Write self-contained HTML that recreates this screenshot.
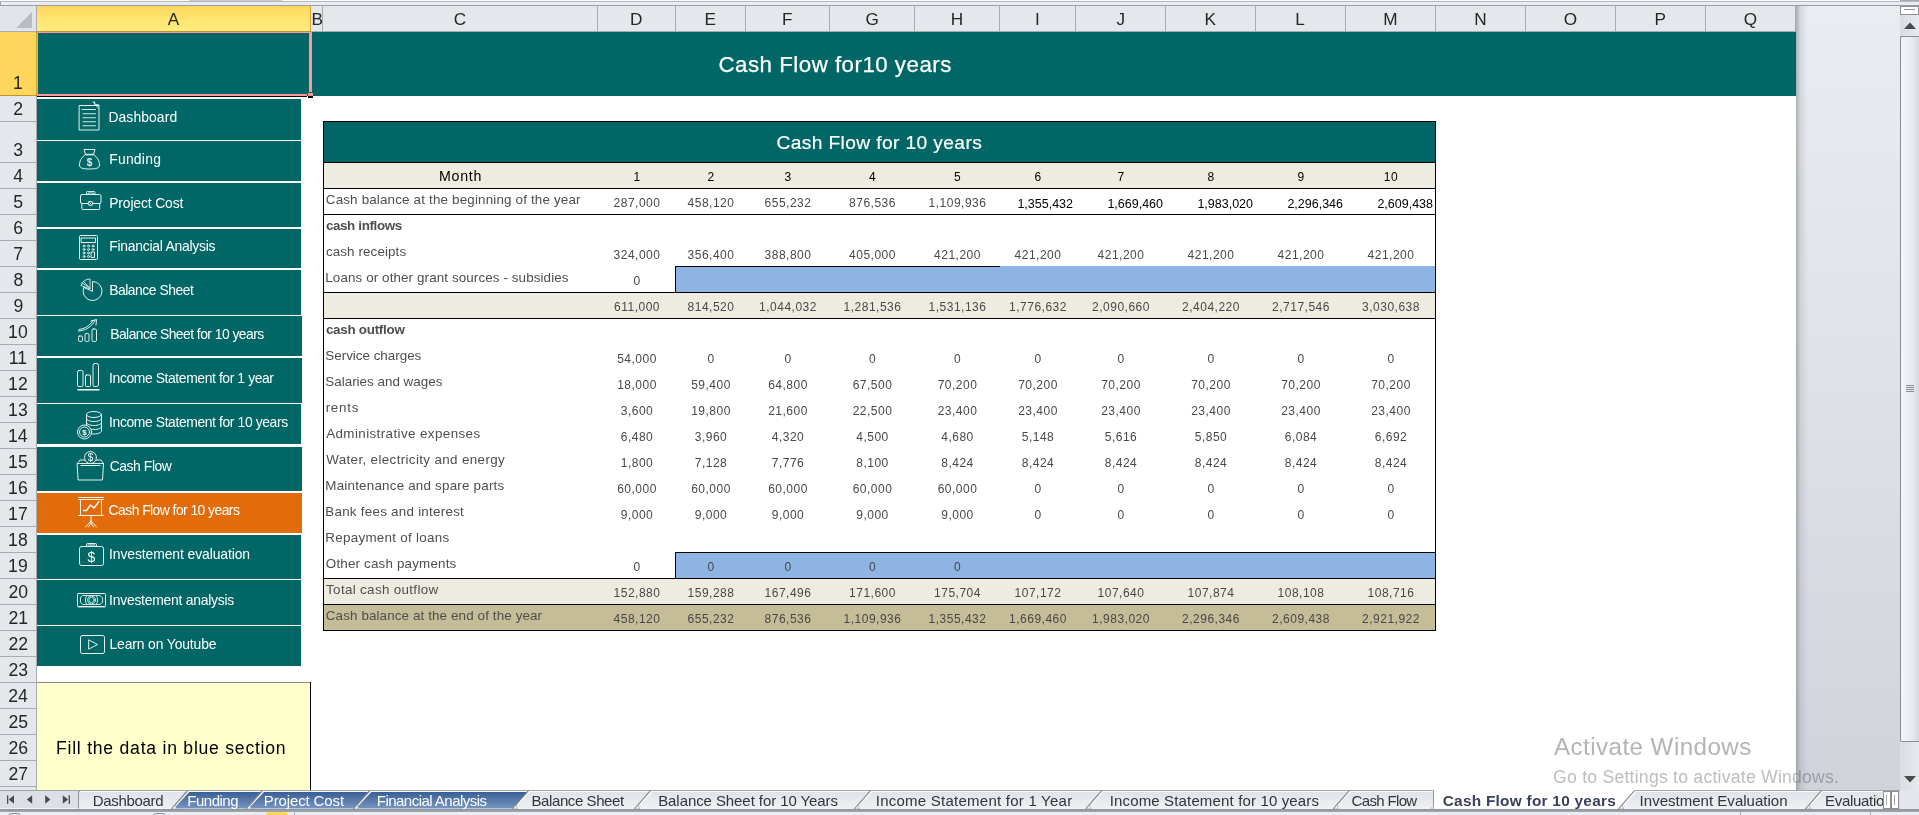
<!DOCTYPE html>
<html lang="en"><head><meta charset="utf-8"><title>Cash Flow for 10 years</title>
<style>
html,body{margin:0;padding:0}
body{width:1919px;height:815px;overflow:hidden;background:#fff;position:relative;font-family:"Liberation Sans",sans-serif;}
.a{position:absolute}
.t{position:absolute;white-space:nowrap;line-height:1}
.ch{position:absolute;top:6px;height:25px;background:#e4e7eb;border-right:1px solid #a9abae;border-bottom:1px solid #a9abae}
.rh{position:absolute;left:0;width:36px;background:#e4e7eb;border-right:1px solid #a9abae;border-bottom:1px solid #a9abae}
.btn{position:absolute;left:37px;background:#006666}
svg.i{position:absolute;overflow:visible;fill:none;stroke:#fff;stroke-width:.9;stroke-linejoin:round;stroke-linecap:round}
.n{position:absolute;white-space:nowrap;line-height:1;color:#484848;font-size:12.0px;letter-spacing:0.5px;text-align:center}
</style></head><body>

<div class="a" style="left:0;top:0;width:1919px;height:1px;background:#fdfdfe"></div>
<div class="a" style="left:0;top:1px;width:1919px;height:1px;background:#b5b8bf"></div>
<div class="a" style="left:0;top:2px;width:1919px;height:3px;background:#e9ebf5"></div>
<div class="a" style="left:0;top:5px;width:1919px;height:1px;background:#9a9ca0"></div>
<div class="a" style="left:1900px;top:0;width:19px;height:1px;background:#a8aaad"></div>
<div class="a" style="left:0;top:2px;width:1px;height:30px;background:#a0a4ab"></div>
<div class="a" style="left:189px;top:0;width:93px;height:1px;background:#c9cbd1"></div>
<div class="a" style="left:0;top:6px;width:36px;height:25px;background:#e1e4e9;border-right:1px solid #a9abae;border-bottom:1px solid #a9abae"></div>
<svg class="a" style="left:15px;top:11px" width="18" height="18"><polygon points="17,1 17,17 1,17" fill="#b9bdc2"/></svg>
<div class="ch" style="left:37px;width:273px;background:linear-gradient(#ffd65c,#ffe36e 45%,#ffec80);border-right-color:#d9a234;border-bottom-color:#c8902a"></div>
<div class="ch" style="left:311px;width:11px;"></div>
<div class="ch" style="left:323px;width:274px;"></div>
<div class="ch" style="left:598px;width:77px;"></div>
<div class="ch" style="left:676px;width:69px;"></div>
<div class="ch" style="left:746px;width:83px;"></div>
<div class="ch" style="left:830px;width:84px;"></div>
<div class="ch" style="left:915px;width:84px;"></div>
<div class="ch" style="left:1000px;width:75px;"></div>
<div class="ch" style="left:1076px;width:89px;"></div>
<div class="ch" style="left:1166px;width:89px;"></div>
<div class="ch" style="left:1256px;width:89px;"></div>
<div class="ch" style="left:1346px;width:89px;"></div>
<div class="ch" style="left:1436px;width:89px;"></div>
<div class="ch" style="left:1526px;width:89px;"></div>
<div class="ch" style="left:1616px;width:89px;"></div>
<div class="ch" style="left:1706px;width:89px;"></div>
<div class="rh" style="top:32px;height:63px;background:#ffd65c;border-right-color:#d9a234;border-bottom-color:#c8902a"></div>
<div class="rh" style="top:96px;height:25px;"></div>
<div class="rh" style="top:122px;height:40px;"></div>
<div class="rh" style="top:163px;height:25px;"></div>
<div class="rh" style="top:189px;height:25px;"></div>
<div class="rh" style="top:215px;height:25px;"></div>
<div class="rh" style="top:241px;height:25px;"></div>
<div class="rh" style="top:267px;height:25px;"></div>
<div class="rh" style="top:293px;height:25px;"></div>
<div class="rh" style="top:319px;height:25px;"></div>
<div class="rh" style="top:345px;height:25px;"></div>
<div class="rh" style="top:371px;height:25px;"></div>
<div class="rh" style="top:397px;height:25px;"></div>
<div class="rh" style="top:423px;height:25px;"></div>
<div class="rh" style="top:449px;height:25px;"></div>
<div class="rh" style="top:475px;height:25px;"></div>
<div class="rh" style="top:501px;height:25px;"></div>
<div class="rh" style="top:527px;height:25px;"></div>
<div class="rh" style="top:553px;height:25px;"></div>
<div class="rh" style="top:579px;height:25px;"></div>
<div class="rh" style="top:605px;height:25px;"></div>
<div class="rh" style="top:631px;height:25px;"></div>
<div class="rh" style="top:657px;height:25px;"></div>
<div class="rh" style="top:683px;height:25px;"></div>
<div class="rh" style="top:709px;height:25px;"></div>
<div class="rh" style="top:735px;height:25px;"></div>
<div class="rh" style="top:761px;height:25px;"></div>
<div class="a" style="left:0;top:787px;width:36px;height:3px;background:#e4e7eb;border-right:1px solid #a9abae"></div>
<div class="a" style="left:37px;top:32px;width:1759px;height:64px;background:#006666"></div>
<div class="t" style="left:718.5px;top:54px;font-size:22.3px;color:#fff;letter-spacing:0.49px;-webkit-text-stroke:.25px #fff;">Cash Flow for10 years</div>
<div class="a" style="left:37px;top:32px;width:274px;height:1px;background:#ff9999"></div>
<div class="a" style="left:37px;top:32px;width:1px;height:64px;background:#ff9999"></div>
<div class="a" style="left:37px;top:94px;width:270px;height:2px;background:#ff9999"></div>
<div class="a" style="left:37px;top:96px;width:270px;height:1px;background:#000"></div>
<div class="a" style="left:309px;top:32px;width:3px;height:60px;background:#ff9999"></div>
<div class="a" style="left:308px;top:93px;width:5px;height:3px;background:#ff9999"></div>
<div class="a" style="left:308px;top:96px;width:5px;height:2px;background:#000"></div>
<div class="btn" style="top:99px;height:41px;width:264px;background:#006666"></div>
<svg class="i" style="left:79px;top:101px" width="22" height="30"><rect x=".5" y="4.500" width="19.500" height="24.500"/><path d="M3 8.500h13.500" stroke-dasharray="1.200 .9" stroke-width=".9"/><path d="M4 12.700h12.500M4 16.700h12.500M4 20.700h12.500M4 24.700h12.500" stroke-width="1.150" opacity=".85"/><path d="M14 .8l5.500 6.500M15.500 .5l.5 3M17 3.500l3 .5" stroke-width=".8"/></svg>
<div class="t" style="left:108.4px;top:111px;font-size:13.9px;color:#fff;letter-spacing:0.1px;">Dashboard</div>
<div class="btn" style="top:141px;height:40px;width:264px;background:#006666"></div>
<svg class="i" style="left:79px;top:149px" width="22" height="21"><path d="M6.500 5.500C2 8.500 .5 12.500 .5 16c0 3 3 4 10 4s10-1 10-4c0-3.500-1.500-7.500-6-10.500z"/><path d="M6.500 5.500L5 .5h11l-1.500 5z"/><text x="10.500" y="16.800" font-size="10" font-weight="bold" style="font-family:Liberation Sans,sans-serif;fill:#fff;stroke:none;text-anchor:middle" opacity=".9">$</text></svg>
<div class="t" style="left:109.2px;top:153px;font-size:13.9px;color:#fff;letter-spacing:0.25px;">Funding</div>
<div class="btn" style="top:183px;height:44px;width:264px;background:#006666"></div>
<svg class="i" style="left:80px;top:191px" width="22" height="20"><rect x=".5" y="3.500" width="20.500" height="9" rx="1.500"/><path d="M1.800 12.500v5.200q0 .8 .8 .8h16.300q.8 0 .8-.8v-5.200"/><path d="M6.500 3.500V1.300q0-.8 .8-.8h6.900q.8 0 .8 .8v2.200M8 3.500V2h5.500v1.500" stroke-width=".8"/><rect x="8.300" y="10.600" width="4.400" height="3.700" rx=".9" fill="#006666"/><path d="M9.500 11.500l2 2M11.500 11.500l-2 2" stroke-width=".6"/></svg>
<div class="t" style="left:109.2px;top:197px;font-size:13.9px;color:#fff;letter-spacing:-0.14px;">Project Cost</div>
<div class="btn" style="top:229px;height:39px;width:264px;background:#006666"></div>
<svg class="i" style="left:79px;top:235px" width="20" height="25"><rect x=".5" y=".5" width="18" height="24" rx="1"/><rect x="2.500" y="3" width="14" height="4.500"/><g stroke-width=".8"><circle cx="5" cy="11" r="1"/><circle cx="9.500" cy="11" r="1"/><circle cx="14" cy="11" r="1"/><circle cx="5" cy="14.500" r="1"/><circle cx="9.500" cy="14.500" r="1"/><circle cx="14" cy="14.500" r="1"/><circle cx="5" cy="18" r="1"/><circle cx="9.500" cy="18" r="1"/><circle cx="5" cy="21.500" r="1"/><circle cx="9.500" cy="21.500" r="1"/></g><rect x="12.500" y="17" width="3" height="5.500"/></svg>
<div class="t" style="left:109.2px;top:240px;font-size:13.9px;color:#fff;letter-spacing:-0.24px;">Financial Analysis</div>
<div class="btn" style="top:270px;height:45px;width:264px;background:#006666"></div>
<svg class="i" style="left:79px;top:278px" width="25" height="24"><path d="M13.500 13V3.500A9.500 9.500 0 1 1 4.600 9.700z"/><path d="M11 10.500V1A9.500 9.500 0 0 0 2.100 7.200zM11 10.500L4.500 3.300M9.500 9L3 5" stroke-width=".8"/></svg>
<div class="t" style="left:109.2px;top:284px;font-size:13.9px;color:#fff;letter-spacing:-0.47px;">Balance Sheet</div>
<div class="btn" style="top:316px;height:40px;width:265px;background:#006666"></div>
<svg class="i" style="left:78px;top:319px" width="20" height="23"><rect x=".5" y="17" width="4" height="5.500" rx="1.300"/><rect x="7" y="14.500" width="4" height="8" rx="1.300"/><rect x="14" y="10" width="4.500" height="12.500" rx="1.300"/><path d="M.5 12c7-.5 12.500-3.500 16.500-10.500M1 10.500c6-.8 10.500-3.500 14-9"/><path d="M13 2l5.500-1.500-.5 5.500"/></svg>
<div class="t" style="left:110.2px;top:328px;font-size:13.9px;color:#fff;letter-spacing:-0.54px;">Balance Sheet for 10 years</div>
<div class="btn" style="top:358px;height:45px;width:265px;background:#006666"></div>
<svg class="i" style="left:77px;top:363px" width="23" height="28"><rect x=".5" y="7.500" width="5.500" height="16" rx="1.500"/><rect x="8.500" y="12" width="5" height="11.500" rx="1"/><rect x="16" y=".5" width="5.500" height="23" rx="1.800"/><path d="M1 26.800h21" stroke-width="1.600"/></svg>
<div class="t" style="left:109.1px;top:372px;font-size:13.9px;color:#fff;letter-spacing:-0.4px;">Income Statement for 1 year</div>
<div class="btn" style="top:404px;height:40px;width:264px;background:#006666"></div>
<svg class="i" style="left:77px;top:411px" width="25" height="29"><ellipse cx="17" cy="3.500" rx="7.500" ry="3"/><path d="M9.500 3.500v16c0 2 3.300 3.500 7.500 3.500s7.500-1.500 7.500-3V3.500M9.500 7.500c0 1.800 3.300 3 7.500 3s7.500-1.200 7.500-3M9.500 11.500c0 1.800 3.300 3 7.500 3s7.500-1.200 7.500-3M9.500 15.500c0 1.800 3.300 3 7.500 3s7.500-1.200 7.500-3"/><circle cx="7.500" cy="21" r="7" fill="#006666"/><circle cx="7.500" cy="21" r="5"/><text x="7.500" y="24" font-size="8" font-weight="bold" style="font-family:Liberation Sans,sans-serif;fill:#fff;stroke:none;text-anchor:middle">$</text></svg>
<div class="t" style="left:109.1px;top:416px;font-size:13.9px;color:#fff;letter-spacing:-0.39px;">Income Statement for 10 years</div>
<div class="btn" style="top:447px;height:44px;width:265px;background:#006666"></div>
<svg class="i" style="left:76px;top:451px" width="29" height="30"><path d="M1.500 12.500h26l-1 16.500H2.500z"/><path d="M1.500 12.500L4 9h21l2.500 3.500M5 14.500h19" /><circle cx="14.500" cy="6.500" r="6" fill="#006666"/><text x="14.500" y="10" font-size="10" style="font-family:Liberation Sans,sans-serif;fill:#fff;stroke:none;text-anchor:middle">$</text></svg>
<div class="t" style="left:109.7px;top:460px;font-size:13.9px;color:#fff;letter-spacing:-0.43px;">Cash Flow</div>
<div class="btn" style="top:493px;height:40px;width:265px;background:#e36c0a"></div>
<svg class="i" style="left:78px;top:497px" width="26" height="31"><path d="M.5 .5h25M.5 2.500h25M.5 18.500h25"/><path d="M2.500 2.500v16M23.500 2.500v16"/><path d="M5.500 13.500h3l4-5.500 3.500 3 5-6.500" stroke-width="1.300"/><path d="M13 18.500v7M13 24l-5.500 6 M13 24l5.500 6M13 26l-2.500 4M13 26l2.500 4"/></svg>
<div class="t" style="left:108.6px;top:504px;font-size:13.9px;color:#fff;letter-spacing:-0.55px;">Cash Flow for 10 years</div>
<div class="btn" style="top:535px;height:44px;width:264px;background:#006666"></div>
<svg class="i" style="left:79px;top:543px" width="25" height="23"><rect x=".5" y="3.500" width="24" height="19" rx="2"/><path d="M7.500 3.500v-2q0-1 1-1h8q1 0 1 1v2M9 2h7"/><text x="12.500" y="18.500" font-size="14" style="font-family:Liberation Sans,sans-serif;fill:#fff;stroke:none;text-anchor:middle">$</text></svg>
<div class="t" style="left:109.1px;top:548px;font-size:13.9px;color:#fff;letter-spacing:-0.09px;">Investement evaluation</div>
<div class="btn" style="top:580px;height:45px;width:264px;background:#006666"></div>
<svg class="i" style="left:77px;top:593px" width="29" height="14"><rect x=".5" y=".5" width="28" height="13" rx=".8"/><path d="M6 2.500h17l2.500 2v5l-2.500 2H6l-2.500-2v-5z" stroke-width=".8"/><circle cx="14.500" cy="7" r="4" stroke-width=".8"/><circle cx="14.500" cy="7" r="2.600" stroke-width=".7"/><path d="M9.500 3c-1.500 1.500-1.500 6.500 0 8M19.500 3c1.500 1.500 1.500 6.500 0 8" stroke-width=".8"/><path d="M1 14h27" stroke-width=".7"/></svg>
<div class="t" style="left:109.1px;top:594px;font-size:13.9px;color:#fff;letter-spacing:-0.24px;">Investement analysis</div>
<div class="btn" style="top:626px;height:40px;width:264px;background:#006666"></div>
<svg class="i" style="left:80px;top:635px" width="25" height="19"><rect x=".5" y=".5" width="24" height="18" rx="1.800"/><path d="M9 5l8.500 4.500L9 14z"/></svg>
<div class="t" style="left:109.5px;top:638px;font-size:13.9px;color:#fff;letter-spacing:-0.13px;">Learn on Youtube</div>
<div class="a" style="left:37px;top:683px;width:273px;height:107px;background:#ffffcc"></div>
<div class="a" style="left:37px;top:682px;width:274px;height:1px;background:#8a8a80"></div>
<div class="a" style="left:310px;top:682px;width:1px;height:108px;background:#000"></div>
<div class="t" style="left:56.0px;top:740px;font-size:17.6px;color:#000;letter-spacing:0.76px;">Fill the data in blue section</div>
<div class="a" style="left:324px;top:122px;width:1111px;height:40px;background:#006666"></div>
<div class="t" style="left:776.5px;top:133px;font-size:19.2px;color:#fff;letter-spacing:0.38px;-webkit-text-stroke:.2px #fff;">Cash Flow for 10 years</div>
<div class="a" style="left:324px;top:163px;width:1111px;height:25px;background:#eeece1"></div>
<div class="a" style="left:324px;top:293px;width:1111px;height:25px;background:#eeece1"></div>
<div class="a" style="left:324px;top:579px;width:1111px;height:25px;background:#eeece1"></div>
<div class="a" style="left:324px;top:605px;width:1111px;height:25px;background:#c4bd97"></div>
<div class="a" style="left:676px;top:267px;width:759px;height:25px;background:#8db4e2"></div>
<div class="a" style="left:676px;top:553px;width:759px;height:25px;background:#8db4e2"></div>
<div class="a" style="left:1000px;top:266px;width:435px;height:1px;background:#8db4e2"></div>
<div class="a" style="left:323px;top:121px;width:1113px;height:1px;background:#000"></div>
<div class="a" style="left:323px;top:162px;width:1113px;height:1px;background:#000"></div>
<div class="a" style="left:323px;top:188px;width:1113px;height:1px;background:#000"></div>
<div class="a" style="left:323px;top:214px;width:1113px;height:1px;background:#000"></div>
<div class="a" style="left:323px;top:292px;width:1113px;height:1px;background:#000"></div>
<div class="a" style="left:323px;top:318px;width:1113px;height:1px;background:#000"></div>
<div class="a" style="left:323px;top:578px;width:1113px;height:1px;background:#000"></div>
<div class="a" style="left:323px;top:604px;width:1113px;height:1px;background:#000"></div>
<div class="a" style="left:323px;top:630px;width:1113px;height:1px;background:#000"></div>
<div class="a" style="left:675px;top:266px;width:325px;height:1px;background:#000"></div>
<div class="a" style="left:675px;top:552px;width:761px;height:1px;background:#000"></div>
<div class="a" style="left:323px;top:121px;width:1px;height:510px;background:#000"></div>
<div class="a" style="left:1435px;top:121px;width:1px;height:510px;background:#000"></div>
<div class="a" style="left:675px;top:266px;width:1px;height:27px;background:#000"></div>
<div class="a" style="left:675px;top:552px;width:1px;height:27px;background:#000"></div>
<div class="t" style="left:325.8px;top:193px;font-size:13.4px;color:#4e4e4e;letter-spacing:0.17px;">Cash balance at the beginning of the year</div>
<div class="t" style="left:325.9px;top:219px;font-size:13.4px;color:#4e4e4e;letter-spacing:-0.37px;font-weight:bold;">cash inflows</div>
<div class="t" style="left:325.9px;top:245px;font-size:13.4px;color:#4e4e4e;letter-spacing:0.11px;">cash receipts</div>
<div class="t" style="left:325.3px;top:271px;font-size:13.4px;color:#4e4e4e;letter-spacing:0.11px;">Loans or other grant sources - subsidies</div>
<div class="t" style="left:325.9px;top:323px;font-size:13.4px;color:#4e4e4e;letter-spacing:-0.26px;font-weight:bold;">cash outflow</div>
<div class="t" style="left:325.3px;top:349px;font-size:13.4px;color:#4e4e4e;letter-spacing:-0.0px;">Service charges</div>
<div class="t" style="left:325.3px;top:375px;font-size:13.4px;color:#4e4e4e;letter-spacing:0.01px;">Salaries and wages</div>
<div class="t" style="left:325.7px;top:401px;font-size:13.4px;color:#4e4e4e;letter-spacing:0.72px;">rents</div>
<div class="t" style="left:326.2px;top:427px;font-size:13.4px;color:#4e4e4e;letter-spacing:0.4px;">Administrative expenses</div>
<div class="t" style="left:326.2px;top:453px;font-size:13.4px;color:#4e4e4e;letter-spacing:0.36px;">Water, electricity and energy</div>
<div class="t" style="left:325.3px;top:479px;font-size:13.4px;color:#4e4e4e;letter-spacing:0.21px;">Maintenance and spare parts</div>
<div class="t" style="left:325.3px;top:505px;font-size:13.4px;color:#4e4e4e;letter-spacing:0.25px;">Bank fees and interest</div>
<div class="t" style="left:325.3px;top:531px;font-size:13.4px;color:#4e4e4e;letter-spacing:0.28px;">Repayment of loans</div>
<div class="t" style="left:325.8px;top:557px;font-size:13.4px;color:#4e4e4e;letter-spacing:0.18px;">Other cash payments</div>
<div class="t" style="left:326.1px;top:583px;font-size:13.4px;color:#4e4e4e;letter-spacing:0.33px;">Total cash outflow</div>
<div class="t" style="left:325.8px;top:609px;font-size:13.4px;color:#4e4e4e;letter-spacing:0.12px;">Cash balance at the end of the year</div>
<div class="t" style="left:439.1px;top:169px;font-size:14.2px;color:#000;letter-spacing:0.7px;">Month</div>
<div class="n" style="left:598px;width:78px;top:163px;margin-top:8px;color:#000;">1</div>
<div class="n" style="left:676px;width:70px;top:163px;margin-top:8px;color:#000;">2</div>
<div class="n" style="left:746px;width:84px;top:163px;margin-top:8px;color:#000;">3</div>
<div class="n" style="left:830px;width:85px;top:163px;margin-top:8px;color:#000;">4</div>
<div class="n" style="left:915px;width:85px;top:163px;margin-top:8px;color:#000;">5</div>
<div class="n" style="left:1000px;width:76px;top:163px;margin-top:8px;color:#000;">6</div>
<div class="n" style="left:1076px;width:90px;top:163px;margin-top:8px;color:#000;">7</div>
<div class="n" style="left:1166px;width:90px;top:163px;margin-top:8px;color:#000;">8</div>
<div class="n" style="left:1256px;width:90px;top:163px;margin-top:8px;color:#000;">9</div>
<div class="n" style="left:1346px;width:90px;top:163px;margin-top:8px;color:#000;">10</div>
<div class="n" style="left:598px;width:78px;top:189px;margin-top:8px;">287,000</div>
<div class="n" style="left:676px;width:70px;top:189px;margin-top:8px;">458,120</div>
<div class="n" style="left:746px;width:84px;top:189px;margin-top:8px;">655,232</div>
<div class="n" style="left:830px;width:85px;top:189px;margin-top:8px;">876,536</div>
<div class="n" style="left:915px;width:85px;top:189px;margin-top:8px;">1,109,936</div>
<div class="n" style="left:1000px;width:73px;top:189px;margin-top:9px;text-align:right;color:#000;font-size:12.5px;letter-spacing:0">1,355,432</div>
<div class="n" style="left:1076px;width:87px;top:189px;margin-top:9px;text-align:right;color:#000;font-size:12.5px;letter-spacing:0">1,669,460</div>
<div class="n" style="left:1166px;width:87px;top:189px;margin-top:9px;text-align:right;color:#000;font-size:12.5px;letter-spacing:0">1,983,020</div>
<div class="n" style="left:1256px;width:87px;top:189px;margin-top:9px;text-align:right;color:#000;font-size:12.5px;letter-spacing:0">2,296,346</div>
<div class="n" style="left:1346px;width:87px;top:189px;margin-top:9px;text-align:right;color:#000;font-size:12.5px;letter-spacing:0">2,609,438</div>
<div class="n" style="left:598px;width:78px;top:241px;margin-top:8px;">324,000</div>
<div class="n" style="left:676px;width:70px;top:241px;margin-top:8px;">356,400</div>
<div class="n" style="left:746px;width:84px;top:241px;margin-top:8px;">388,800</div>
<div class="n" style="left:830px;width:85px;top:241px;margin-top:8px;">405,000</div>
<div class="n" style="left:915px;width:85px;top:241px;margin-top:8px;">421,200</div>
<div class="n" style="left:1000px;width:76px;top:241px;margin-top:8px;">421,200</div>
<div class="n" style="left:1076px;width:90px;top:241px;margin-top:8px;">421,200</div>
<div class="n" style="left:1166px;width:90px;top:241px;margin-top:8px;">421,200</div>
<div class="n" style="left:1256px;width:90px;top:241px;margin-top:8px;">421,200</div>
<div class="n" style="left:1346px;width:90px;top:241px;margin-top:8px;">421,200</div>
<div class="n" style="left:598px;width:78px;top:267px;margin-top:8px;">0</div>
<div class="n" style="left:598px;width:78px;top:293px;margin-top:8px;">611,000</div>
<div class="n" style="left:676px;width:70px;top:293px;margin-top:8px;">814,520</div>
<div class="n" style="left:746px;width:84px;top:293px;margin-top:8px;">1,044,032</div>
<div class="n" style="left:830px;width:85px;top:293px;margin-top:8px;">1,281,536</div>
<div class="n" style="left:915px;width:85px;top:293px;margin-top:8px;">1,531,136</div>
<div class="n" style="left:1000px;width:76px;top:293px;margin-top:8px;">1,776,632</div>
<div class="n" style="left:1076px;width:90px;top:293px;margin-top:8px;">2,090,660</div>
<div class="n" style="left:1166px;width:90px;top:293px;margin-top:8px;">2,404,220</div>
<div class="n" style="left:1256px;width:90px;top:293px;margin-top:8px;">2,717,546</div>
<div class="n" style="left:1346px;width:90px;top:293px;margin-top:8px;">3,030,638</div>
<div class="n" style="left:598px;width:78px;top:345px;margin-top:8px;">54,000</div>
<div class="n" style="left:676px;width:70px;top:345px;margin-top:8px;">0</div>
<div class="n" style="left:746px;width:84px;top:345px;margin-top:8px;">0</div>
<div class="n" style="left:830px;width:85px;top:345px;margin-top:8px;">0</div>
<div class="n" style="left:915px;width:85px;top:345px;margin-top:8px;">0</div>
<div class="n" style="left:1000px;width:76px;top:345px;margin-top:8px;">0</div>
<div class="n" style="left:1076px;width:90px;top:345px;margin-top:8px;">0</div>
<div class="n" style="left:1166px;width:90px;top:345px;margin-top:8px;">0</div>
<div class="n" style="left:1256px;width:90px;top:345px;margin-top:8px;">0</div>
<div class="n" style="left:1346px;width:90px;top:345px;margin-top:8px;">0</div>
<div class="n" style="left:598px;width:78px;top:371px;margin-top:8px;">18,000</div>
<div class="n" style="left:676px;width:70px;top:371px;margin-top:8px;">59,400</div>
<div class="n" style="left:746px;width:84px;top:371px;margin-top:8px;">64,800</div>
<div class="n" style="left:830px;width:85px;top:371px;margin-top:8px;">67,500</div>
<div class="n" style="left:915px;width:85px;top:371px;margin-top:8px;">70,200</div>
<div class="n" style="left:1000px;width:76px;top:371px;margin-top:8px;">70,200</div>
<div class="n" style="left:1076px;width:90px;top:371px;margin-top:8px;">70,200</div>
<div class="n" style="left:1166px;width:90px;top:371px;margin-top:8px;">70,200</div>
<div class="n" style="left:1256px;width:90px;top:371px;margin-top:8px;">70,200</div>
<div class="n" style="left:1346px;width:90px;top:371px;margin-top:8px;">70,200</div>
<div class="n" style="left:598px;width:78px;top:397px;margin-top:8px;">3,600</div>
<div class="n" style="left:676px;width:70px;top:397px;margin-top:8px;">19,800</div>
<div class="n" style="left:746px;width:84px;top:397px;margin-top:8px;">21,600</div>
<div class="n" style="left:830px;width:85px;top:397px;margin-top:8px;">22,500</div>
<div class="n" style="left:915px;width:85px;top:397px;margin-top:8px;">23,400</div>
<div class="n" style="left:1000px;width:76px;top:397px;margin-top:8px;">23,400</div>
<div class="n" style="left:1076px;width:90px;top:397px;margin-top:8px;">23,400</div>
<div class="n" style="left:1166px;width:90px;top:397px;margin-top:8px;">23,400</div>
<div class="n" style="left:1256px;width:90px;top:397px;margin-top:8px;">23,400</div>
<div class="n" style="left:1346px;width:90px;top:397px;margin-top:8px;">23,400</div>
<div class="n" style="left:598px;width:78px;top:423px;margin-top:8px;">6,480</div>
<div class="n" style="left:676px;width:70px;top:423px;margin-top:8px;">3,960</div>
<div class="n" style="left:746px;width:84px;top:423px;margin-top:8px;">4,320</div>
<div class="n" style="left:830px;width:85px;top:423px;margin-top:8px;">4,500</div>
<div class="n" style="left:915px;width:85px;top:423px;margin-top:8px;">4,680</div>
<div class="n" style="left:1000px;width:76px;top:423px;margin-top:8px;">5,148</div>
<div class="n" style="left:1076px;width:90px;top:423px;margin-top:8px;">5,616</div>
<div class="n" style="left:1166px;width:90px;top:423px;margin-top:8px;">5,850</div>
<div class="n" style="left:1256px;width:90px;top:423px;margin-top:8px;">6,084</div>
<div class="n" style="left:1346px;width:90px;top:423px;margin-top:8px;">6,692</div>
<div class="n" style="left:598px;width:78px;top:449px;margin-top:8px;">1,800</div>
<div class="n" style="left:676px;width:70px;top:449px;margin-top:8px;">7,128</div>
<div class="n" style="left:746px;width:84px;top:449px;margin-top:8px;">7,776</div>
<div class="n" style="left:830px;width:85px;top:449px;margin-top:8px;">8,100</div>
<div class="n" style="left:915px;width:85px;top:449px;margin-top:8px;">8,424</div>
<div class="n" style="left:1000px;width:76px;top:449px;margin-top:8px;">8,424</div>
<div class="n" style="left:1076px;width:90px;top:449px;margin-top:8px;">8,424</div>
<div class="n" style="left:1166px;width:90px;top:449px;margin-top:8px;">8,424</div>
<div class="n" style="left:1256px;width:90px;top:449px;margin-top:8px;">8,424</div>
<div class="n" style="left:1346px;width:90px;top:449px;margin-top:8px;">8,424</div>
<div class="n" style="left:598px;width:78px;top:475px;margin-top:8px;">60,000</div>
<div class="n" style="left:676px;width:70px;top:475px;margin-top:8px;">60,000</div>
<div class="n" style="left:746px;width:84px;top:475px;margin-top:8px;">60,000</div>
<div class="n" style="left:830px;width:85px;top:475px;margin-top:8px;">60,000</div>
<div class="n" style="left:915px;width:85px;top:475px;margin-top:8px;">60,000</div>
<div class="n" style="left:1000px;width:76px;top:475px;margin-top:8px;">0</div>
<div class="n" style="left:1076px;width:90px;top:475px;margin-top:8px;">0</div>
<div class="n" style="left:1166px;width:90px;top:475px;margin-top:8px;">0</div>
<div class="n" style="left:1256px;width:90px;top:475px;margin-top:8px;">0</div>
<div class="n" style="left:1346px;width:90px;top:475px;margin-top:8px;">0</div>
<div class="n" style="left:598px;width:78px;top:501px;margin-top:8px;">9,000</div>
<div class="n" style="left:676px;width:70px;top:501px;margin-top:8px;">9,000</div>
<div class="n" style="left:746px;width:84px;top:501px;margin-top:8px;">9,000</div>
<div class="n" style="left:830px;width:85px;top:501px;margin-top:8px;">9,000</div>
<div class="n" style="left:915px;width:85px;top:501px;margin-top:8px;">9,000</div>
<div class="n" style="left:1000px;width:76px;top:501px;margin-top:8px;">0</div>
<div class="n" style="left:1076px;width:90px;top:501px;margin-top:8px;">0</div>
<div class="n" style="left:1166px;width:90px;top:501px;margin-top:8px;">0</div>
<div class="n" style="left:1256px;width:90px;top:501px;margin-top:8px;">0</div>
<div class="n" style="left:1346px;width:90px;top:501px;margin-top:8px;">0</div>
<div class="n" style="left:598px;width:78px;top:553px;margin-top:8px;">0</div>
<div class="n" style="left:676px;width:70px;top:553px;margin-top:8px;">0</div>
<div class="n" style="left:746px;width:84px;top:553px;margin-top:8px;">0</div>
<div class="n" style="left:830px;width:85px;top:553px;margin-top:8px;">0</div>
<div class="n" style="left:915px;width:85px;top:553px;margin-top:8px;">0</div>
<div class="n" style="left:598px;width:78px;top:579px;margin-top:8px;">152,880</div>
<div class="n" style="left:676px;width:70px;top:579px;margin-top:8px;">159,288</div>
<div class="n" style="left:746px;width:84px;top:579px;margin-top:8px;">167,496</div>
<div class="n" style="left:830px;width:85px;top:579px;margin-top:8px;">171,600</div>
<div class="n" style="left:915px;width:85px;top:579px;margin-top:8px;">175,704</div>
<div class="n" style="left:1000px;width:76px;top:579px;margin-top:8px;">107,172</div>
<div class="n" style="left:1076px;width:90px;top:579px;margin-top:8px;">107,640</div>
<div class="n" style="left:1166px;width:90px;top:579px;margin-top:8px;">107,874</div>
<div class="n" style="left:1256px;width:90px;top:579px;margin-top:8px;">108,108</div>
<div class="n" style="left:1346px;width:90px;top:579px;margin-top:8px;">108,716</div>
<div class="n" style="left:598px;width:78px;top:605px;margin-top:8px;">458,120</div>
<div class="n" style="left:676px;width:70px;top:605px;margin-top:8px;">655,232</div>
<div class="n" style="left:746px;width:84px;top:605px;margin-top:8px;">876,536</div>
<div class="n" style="left:830px;width:85px;top:605px;margin-top:8px;">1,109,936</div>
<div class="n" style="left:915px;width:85px;top:605px;margin-top:8px;">1,355,432</div>
<div class="n" style="left:1000px;width:76px;top:605px;margin-top:8px;">1,669,460</div>
<div class="n" style="left:1076px;width:90px;top:605px;margin-top:8px;">1,983,020</div>
<div class="n" style="left:1166px;width:90px;top:605px;margin-top:8px;">2,296,346</div>
<div class="n" style="left:1256px;width:90px;top:605px;margin-top:8px;">2,609,438</div>
<div class="n" style="left:1346px;width:90px;top:605px;margin-top:8px;">2,921,922</div>
<div class="t" style="left:1553.9px;top:735px;font-size:24.2px;color:#b4b4b4;letter-spacing:0.44px;">Activate Windows</div>
<div class="t" style="left:1553.1px;top:769px;font-size:17.6px;color:#bdbdbd;letter-spacing:0.24px;">Go to Settings to activate Windows.</div>
<div class="a" style="left:1796px;top:6px;width:104px;height:784px;background:linear-gradient(#e9ecf1,#dfe2e7 45%,#d0d4da);mix-blend-mode:multiply"></div>
<div class="a" style="left:1796px;top:6px;width:12px;height:784px;background:linear-gradient(90deg,rgba(120,124,132,.55),rgba(120,124,132,.18) 35%,rgba(120,124,132,0))"></div>
<div class="a" style="left:1900px;top:6px;width:19px;height:784px;background:linear-gradient(90deg,#d9dce3,#e6e9ef)"></div>
<div class="a" style="left:1900px;top:6px;width:19px;height:9px;background:#fff;border:1px solid #8e9095;box-sizing:border-box"></div>
<div class="a" style="left:1904px;top:9px;width:11px;height:1px;background:#8e9095"></div>
<svg class="a" style="left:1903px;top:22px" width="14" height="8"><polygon points="7,0.500 13,7 1,7" fill="#4a4a4a"/></svg>
<div class="a" style="left:1900px;top:36px;width:19px;height:706px;background:linear-gradient(90deg,#f4f5f8,#e9ebf1 60%,#d5d8e0);border:1px solid #8b8e98;border-right:0;border-radius:2px 0 0 2px;box-sizing:border-box"></div>
<div class="a" style="left:1906px;top:385px;width:8px;height:1px;background:#8a8c91"></div>
<div class="a" style="left:1906px;top:387px;width:8px;height:1px;background:#8a8c91"></div>
<div class="a" style="left:1906px;top:389px;width:8px;height:1px;background:#8a8c91"></div>
<div class="a" style="left:1906px;top:391px;width:8px;height:1px;background:#8a8c91"></div>
<svg class="a" style="left:1903px;top:775px" width="14" height="8"><polygon points="1,1 13,1 7,7.500" fill="#4a4a4a"/></svg>
<div class="a" style="left:0;top:790px;width:1919px;height:25px;background:#dce0e6"></div>
<div class="a" style="left:0;top:808px;width:1919px;height:1px;background:#f4f5f7"></div>
<div class="a" style="left:0;top:809px;width:1919px;height:3px;background:linear-gradient(#8d929a,#a4a9b1)"></div>
<div class="a" style="left:0;top:812px;width:1919px;height:3px;background:#eaedf2"></div>
<div class="a" style="left:266px;top:812px;width:22px;height:3px;background:#ffd65c;border-radius:3px 3px 0 0"></div>
<div class="a" style="left:294px;top:812px;width:1px;height:3px;background:#a9adb4"></div>
<div class="a" style="left:8px;top:813px;width:13px;height:4px;border:1px solid #8a8f98;border-radius:6px 6px 0 0;box-sizing:border-box"></div>
<div class="a" style="left:153px;top:813px;width:13px;height:4px;border:1px solid #8a8f98;border-radius:6px 6px 0 0;box-sizing:border-box"></div>
<div class="a" style="left:1740px;top:812px;width:1px;height:3px;background:#a9adb4"></div>
<div class="a" style="left:1870px;top:812px;width:1px;height:3px;background:#a9adb4"></div>
<svg class="a" style="left:0;top:790px" width="1919" height="20"><defs><linearGradient id="gb" x1="0" y1="0" x2="0" y2="1"><stop offset="0" stop-color="#365d93"/><stop offset="1" stop-color="#7796c1"/></linearGradient><linearGradient id="gn" x1="0" y1="0" x2="0" y2="1"><stop offset="0" stop-color="#dfe2e7"/><stop offset="1" stop-color="#eff1f4"/></linearGradient></defs><rect x="0" y="0" width="1900" height="1" fill="#a0a5ad"/><polygon points="79.0,18.500 79.0,1.500 187.5,1.500 171.5,18.500" fill="url(#gn)"/><path d="M79.0 1.500H187.5" stroke="#fbfbfc" stroke-width="1"/><polygon points="171.5,18.500 187.5,1.500 262.2,1.500 246.2,18.500" fill="url(#gb)"/><path d="M187.5 1.500H262.2" stroke="#fbfbfc" stroke-width="1"/><polygon points="246.2,18.500 262.2,1.500 369.5,1.500 353.5,18.500" fill="url(#gb)"/><path d="M262.2 1.500H369.5" stroke="#fbfbfc" stroke-width="1"/><polygon points="353.5,18.500 369.5,1.500 528.4,1.500 512.4,18.500" fill="url(#gb)"/><path d="M369.5 1.500H528.4" stroke="#fbfbfc" stroke-width="1"/><polygon points="512.4,18.500 528.4,1.500 650.5,1.500 634.5,18.500" fill="url(#gn)"/><path d="M528.4 1.500H650.5" stroke="#fbfbfc" stroke-width="1"/><polygon points="634.5,18.500 650.5,1.500 870.5,1.500 854.5,18.500" fill="url(#gn)"/><path d="M650.5 1.500H870.5" stroke="#fbfbfc" stroke-width="1"/><polygon points="854.5,18.500 870.5,1.500 1101.8,1.500 1085.8,18.500" fill="url(#gn)"/><path d="M870.5 1.500H1101.8" stroke="#fbfbfc" stroke-width="1"/><polygon points="1085.8,18.500 1101.8,1.500 1349.3,1.500 1333.3,18.500" fill="url(#gn)"/><path d="M1101.8 1.500H1349.3" stroke="#fbfbfc" stroke-width="1"/><polygon points="1333.3,18.500 1349.3,1.500 1433.5,1.500 1433.5,18.500" fill="url(#gn)"/><path d="M1349.3 1.500H1433.5" stroke="#fbfbfc" stroke-width="1"/><polygon points="1433.5,18.500 1433.5,0 1635.5,0 1618.5,18.500" fill="#fff"/><polygon points="1618.5,18.500 1634.5,1.500 1821.5,1.500 1805.5,18.500" fill="url(#gn)"/><path d="M1634.5 1.500H1821.5" stroke="#fbfbfc" stroke-width="1"/><polygon points="1805.5,18.500 1821.5,1.500 1883,1.500 1883,18.500" fill="url(#gn)"/><path d="M1821.5 1.500H1883" stroke="#fbfbfc" stroke-width="1"/><path d="M172.9 18.500L188.9 1.500" stroke="#f8f9fa" stroke-width="1.300"/><path d="M171.5 18.800L187.5 .5" stroke="#7b8088" stroke-width="1.100"/><polygon points="171.8,19 176.5,19 175.3,14.800" fill="#f4f5f7" stroke="#9096a0" stroke-width=".6"/><path d="M247.6 18.500L263.59999999999997 1.500" stroke="#f8f9fa" stroke-width="1.300"/><path d="M246.2 18.800L262.2 .5" stroke="#7b8088" stroke-width="1.100"/><polygon points="246.5,19 251.2,19 250.0,14.800" fill="#f4f5f7" stroke="#9096a0" stroke-width=".6"/><path d="M354.9 18.500L370.9 1.500" stroke="#f8f9fa" stroke-width="1.300"/><path d="M353.5 18.800L369.5 .5" stroke="#7b8088" stroke-width="1.100"/><polygon points="353.8,19 358.5,19 357.3,14.800" fill="#f4f5f7" stroke="#9096a0" stroke-width=".6"/><path d="M513.8 18.500L529.8 1.500" stroke="#f8f9fa" stroke-width="1.300"/><path d="M512.4 18.800L528.4 .5" stroke="#7b8088" stroke-width="1.100"/><polygon points="512.6999999999999,19 517.4,19 516.1999999999999,14.800" fill="#f4f5f7" stroke="#9096a0" stroke-width=".6"/><path d="M635.9 18.500L651.9 1.500" stroke="#f8f9fa" stroke-width="1.300"/><path d="M634.5 18.800L650.5 .5" stroke="#7b8088" stroke-width="1.100"/><polygon points="634.8,19 639.5,19 638.3,14.800" fill="#f4f5f7" stroke="#9096a0" stroke-width=".6"/><path d="M855.9 18.500L871.9 1.500" stroke="#f8f9fa" stroke-width="1.300"/><path d="M854.5 18.800L870.5 .5" stroke="#7b8088" stroke-width="1.100"/><polygon points="854.8,19 859.5,19 858.3,14.800" fill="#f4f5f7" stroke="#9096a0" stroke-width=".6"/><path d="M1087.2 18.500L1103.2 1.500" stroke="#f8f9fa" stroke-width="1.300"/><path d="M1085.8 18.800L1101.8 .5" stroke="#7b8088" stroke-width="1.100"/><polygon points="1086.1,19 1090.8,19 1089.6,14.800" fill="#f4f5f7" stroke="#9096a0" stroke-width=".6"/><path d="M1334.7 18.500L1350.7 1.500" stroke="#f8f9fa" stroke-width="1.300"/><path d="M1333.3 18.800L1349.3 .5" stroke="#7b8088" stroke-width="1.100"/><polygon points="1333.6,19 1338.3,19 1337.1,14.800" fill="#f4f5f7" stroke="#9096a0" stroke-width=".6"/><path d="M1619.9 18.500L1635.9 1.500" stroke="#f8f9fa" stroke-width="1.300"/><path d="M1618.5 18.800L1634.5 .5" stroke="#7b8088" stroke-width="1.100"/><polygon points="1618.8,19 1623.5,19 1622.3,14.800" fill="#f4f5f7" stroke="#9096a0" stroke-width=".6"/><path d="M1806.9 18.500L1822.9 1.500" stroke="#f8f9fa" stroke-width="1.300"/><path d="M1805.5 18.800L1821.5 .5" stroke="#7b8088" stroke-width="1.100"/><polygon points="1805.8,19 1810.5,19 1809.3,14.800" fill="#f4f5f7" stroke="#9096a0" stroke-width=".6"/><path d="M78.500 18.500V2.500Q78.500 1 80 1" stroke="#8d9199" stroke-width="1" fill="none"/><path d="M1433.500 .5V18.500" stroke="#8d9199" stroke-width="1" fill="none"/><polygon points="1430,19 1433.500,19 1433.500,15.500" fill="#f2f3f5" stroke="#9ea3ab" stroke-width=".5"/><g fill="#434a57"><rect x="7" y="5.300" width="1.300" height="8.500"/><polygon points="14,5.300 14,13.800 8.800,9.500"/><polygon points="32.200,5.300 32.200,13.800 26.800,9.500"/><polygon points="45.200,5.300 45.200,13.800 50.400,9.500"/><polygon points="62.800,5.300 62.800,13.800 68,9.500"/><rect x="68.600" y="5.300" width="1.300" height="8.500"/></g></svg>
<div class="t" style="left:92.8px;top:793px;font-size:15.0px;color:#33333d;letter-spacing:-0.33px;">Dashboard</div>
<div class="t" style="left:187.3px;top:793px;font-size:15.0px;color:#fff;letter-spacing:-0.49px;">Funding</div>
<div class="t" style="left:263.8px;top:793px;font-size:15.0px;color:#fff;letter-spacing:-0.13px;">Project Cost</div>
<div class="t" style="left:376.8px;top:793px;font-size:15.0px;color:#fff;letter-spacing:-0.53px;">Financial Analysis</div>
<div class="t" style="left:531.5px;top:793px;font-size:15.0px;color:#33333d;letter-spacing:-0.41px;">Balance Sheet</div>
<div class="t" style="left:658.2px;top:793px;font-size:15.0px;color:#33333d;letter-spacing:-0.08px;">Balance Sheet for 10 Years</div>
<div class="t" style="left:875.8px;top:793px;font-size:15.0px;color:#33333d;letter-spacing:0.24px;">Income Statement for 1 Year</div>
<div class="t" style="left:1109.7px;top:793px;font-size:15.0px;color:#33333d;letter-spacing:0.15px;">Income Statement for 10 years</div>
<div class="t" style="left:1351.6px;top:793px;font-size:15.0px;color:#33333d;letter-spacing:-0.66px;">Cash Flow</div>
<div class="t" style="left:1442.7px;top:793px;font-size:15.4px;color:#3a4258;letter-spacing:0.26px;font-weight:bold;">Cash Flow for 10 years</div>
<div class="t" style="left:1639.6px;top:793px;font-size:15.0px;color:#33333d;letter-spacing:0.02px;">Investment Evaluation</div>
<div class="t" style="left:1825.1px;top:793px;font-size:15.0px;color:#33333d;letter-spacing:-0.31px;">Evaluatio</div>
<div class="a" style="left:1883px;top:791px;width:17px;height:18px;background:#d9dce3"></div>
<div class="a" style="left:1883px;top:791px;width:8px;height:18px;background:#fff;border:1px solid #8e9095;box-sizing:border-box"></div>
<div class="a" style="left:1891px;top:791px;width:8px;height:18px;background:#fff;border:1px solid #8e9095;box-sizing:border-box"></div>
<div class="a" style="left:1886px;top:795px;width:1px;height:10px;background:#a5a8ad"></div>
<div class="a" style="left:1894px;top:795px;width:1px;height:10px;background:#a5a8ad"></div>
<div class="a" style="left:1900px;top:790px;width:19px;height:19px;background:#e3e6ec"></div>
<div class="t" style="left:167.7px;top:11px;font-size:17.2px;color:#262626">A</div>
<div class="t" style="left:311.5px;top:11px;font-size:17.2px;color:#262626">B</div>
<div class="t" style="left:453.8px;top:11px;font-size:17.2px;color:#262626">C</div>
<div class="t" style="left:630.0px;top:11px;font-size:17.2px;color:#262626">D</div>
<div class="t" style="left:704.4px;top:11px;font-size:17.2px;color:#262626">E</div>
<div class="t" style="left:781.9px;top:11px;font-size:17.2px;color:#262626">F</div>
<div class="t" style="left:865.5px;top:11px;font-size:17.2px;color:#262626">G</div>
<div class="t" style="left:950.7px;top:11px;font-size:17.2px;color:#262626">H</div>
<div class="t" style="left:1035.0px;top:11px;font-size:17.2px;color:#262626">I</div>
<div class="t" style="left:1116.6px;top:11px;font-size:17.2px;color:#262626">J</div>
<div class="t" style="left:1204.4px;top:11px;font-size:17.2px;color:#262626">K</div>
<div class="t" style="left:1295.3px;top:11px;font-size:17.2px;color:#262626">L</div>
<div class="t" style="left:1383.3px;top:11px;font-size:17.2px;color:#262626">M</div>
<div class="t" style="left:1474.2px;top:11px;font-size:17.2px;color:#262626">N</div>
<div class="t" style="left:1563.8px;top:11px;font-size:17.2px;color:#262626">O</div>
<div class="t" style="left:1654.5px;top:11px;font-size:17.2px;color:#262626">P</div>
<div class="t" style="left:1743.8px;top:11px;font-size:17.2px;color:#262626">Q</div>
<div class="t" style="left:13.1px;top:75px;font-size:17.6px;color:#262626">1</div>
<div class="t" style="left:13.3px;top:101px;font-size:17.6px;color:#262626">2</div>
<div class="t" style="left:13.3px;top:142px;font-size:17.6px;color:#262626">3</div>
<div class="t" style="left:13.3px;top:168px;font-size:17.6px;color:#262626">4</div>
<div class="t" style="left:13.2px;top:194px;font-size:17.6px;color:#262626">5</div>
<div class="t" style="left:13.3px;top:220px;font-size:17.6px;color:#262626">6</div>
<div class="t" style="left:13.3px;top:246px;font-size:17.6px;color:#262626">7</div>
<div class="t" style="left:13.4px;top:272px;font-size:17.6px;color:#262626">8</div>
<div class="t" style="left:13.4px;top:298px;font-size:17.6px;color:#262626">9</div>
<div class="t" style="left:8.1px;top:324px;font-size:17.6px;color:#262626">10</div>
<div class="t" style="left:8.8px;top:350px;font-size:17.6px;color:#262626">11</div>
<div class="t" style="left:8.1px;top:376px;font-size:17.6px;color:#262626">12</div>
<div class="t" style="left:8.1px;top:402px;font-size:17.6px;color:#262626">13</div>
<div class="t" style="left:7.9px;top:428px;font-size:17.6px;color:#262626">14</div>
<div class="t" style="left:8.1px;top:454px;font-size:17.6px;color:#262626">15</div>
<div class="t" style="left:8.1px;top:480px;font-size:17.6px;color:#262626">16</div>
<div class="t" style="left:8.1px;top:506px;font-size:17.6px;color:#262626">17</div>
<div class="t" style="left:8.1px;top:532px;font-size:17.6px;color:#262626">18</div>
<div class="t" style="left:8.1px;top:558px;font-size:17.6px;color:#262626">19</div>
<div class="t" style="left:8.4px;top:584px;font-size:17.6px;color:#262626">20</div>
<div class="t" style="left:8.4px;top:610px;font-size:17.6px;color:#262626">21</div>
<div class="t" style="left:8.4px;top:636px;font-size:17.6px;color:#262626">22</div>
<div class="t" style="left:8.4px;top:662px;font-size:17.6px;color:#262626">23</div>
<div class="t" style="left:8.2px;top:688px;font-size:17.6px;color:#262626">24</div>
<div class="t" style="left:8.4px;top:714px;font-size:17.6px;color:#262626">25</div>
<div class="t" style="left:8.4px;top:740px;font-size:17.6px;color:#262626">26</div>
<div class="t" style="left:8.4px;top:766px;font-size:17.6px;color:#262626">27</div>
</body></html>
